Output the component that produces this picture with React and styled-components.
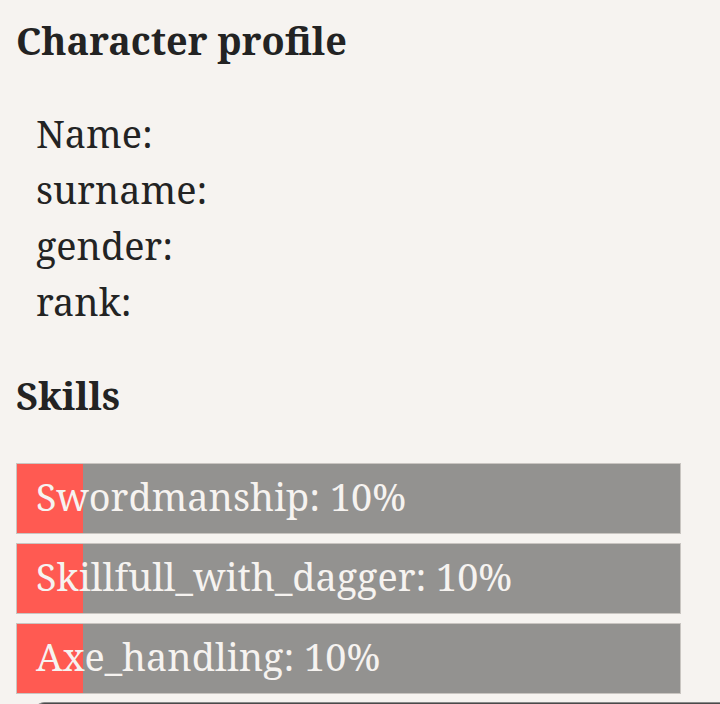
import React from "react";
import styled, { createGlobalStyle } from "styled-components";

const Global = createGlobalStyle`
  html, body { margin: 0; padding: 0; background: #f6f3f0; }
  body { font-family: "Noto Serif", "DejaVu Serif", "Liberation Serif", serif; color: #232323; overflow: hidden; }
`;

const Page = styled.div`
  width: 720px;
  height: 704px;
  box-sizing: border-box;
  padding: 13px 39px 0 16px;
  position: relative;
  overflow: hidden;
`;

const Heading = styled.h2`
  margin: 0 0 ${(p) => p.$after}px 0;
  font-size: 37.8px;
  line-height: 56px;
  font-weight: 700;
`;

const InfoList = styled.ul`
  list-style: none;
  margin: 0 0 38px 0;
  padding: 0 0 0 20px;
  font-size: 37.8px;
  line-height: 56px;
`;

const Skills = styled.div`
  display: flex;
  flex-direction: column;
  gap: 9px;
`;

const Bar = styled.div`
  position: relative;
  height: 71px;
  box-sizing: border-box;
  border: 1px solid #c9c5c1;
  background: #939290;
  overflow: hidden;
`;

const Fill = styled.div`
  position: absolute;
  left: 0;
  top: 0;
  bottom: 0;
  background: #ff5a52;
`;

const Label = styled.span`
  position: relative;
  display: block;
  padding-left: 19px;
  font-size: 37.8px;
  line-height: 66px;
  color: #f6f3f0;
`;

const BottomPanel = styled.div`
  position: absolute;
  left: 33px;
  top: 702px;
  width: 720px;
  height: 40px;
  background: #4a4a4a;
  border-top: 1px solid #8a8a8a;
  border-radius: 12px 0 0 0;
`;

const info = ["Name:", "surname:", "gender:", "rank:"];
const skills = [
  { name: "Swordmanship", value: 10 },
  { name: "Skillfull_with_dagger", value: 10 },
  { name: "Axe_handling", value: 10 },
];

export default function App() {
  return (
    <Page>
      <Global />
      <Heading $after={37}>Character profile</Heading>
      <InfoList>
        {info.map((i) => (
          <li key={i}>{i}</li>
        ))}
      </InfoList>
      <Heading $after={39}>Skills</Heading>
      <Skills>
        {skills.map((s) => (
          <Bar key={s.name}>
            <Fill style={{ width: `${s.value}%` }} />
            <Label>
              {s.name}: {s.value}%
            </Label>
          </Bar>
        ))}
      </Skills>
      <BottomPanel />
    </Page>
  );
}
